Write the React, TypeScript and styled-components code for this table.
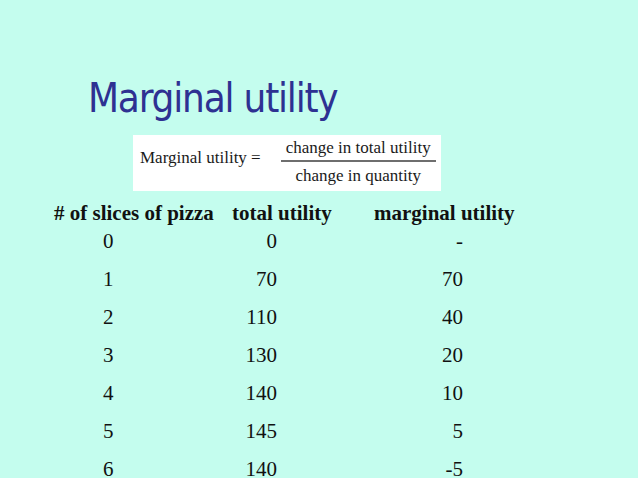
import React from "react";
import styled, { createGlobalStyle } from "styled-components";

const GlobalStyle = createGlobalStyle`
  html, body {
    margin: 0;
    padding: 0;
    background: #c4fdee;
  }
  body {
    width: 638px;
    height: 478px;
    overflow: hidden;
  }
`;

const Slide = styled.div`
  width: 638px;
  height: 478px;
  box-sizing: border-box;
  padding-top: 75px;
  background: #c4fdee;
  display: flex;
  flex-direction: column;
  overflow: hidden;

  & > * {
    flex-shrink: 0;
  }
`;

const Title = styled.h1`
  margin: 0 0 0 88px;
  font-family: "DejaVu Sans Condensed", "DejaVu Sans", sans-serif;
  font-weight: normal;
  font-size: 40px;
  line-height: 46px;
  letter-spacing: -1.2px;
  color: #2e3192;
`;

const FormulaBox = styled.div`
  margin: 14px 0 0 133px;
  width: 308px;
  height: 56px;
  box-sizing: border-box;
  padding: 3px 5px 0 7px;
  background: #ffffff;
  display: flex;
  align-items: flex-start;
  font-family: "Liberation Serif", "Times New Roman", serif;
  font-size: 17px;
  color: #1a1a1a;
`;

const FormulaLabel = styled.span`
  margin-top: 10px;
  line-height: 20px;
  white-space: nowrap;
`;

const Fraction = styled.div`
  margin-left: 20px;
  width: 155px;
  display: flex;
  flex-direction: column;
  align-items: center;
`;

const Numerator = styled.span`
  line-height: 20px;
  white-space: nowrap;
`;

const FractionRule = styled.div`
  align-self: stretch;
  height: 2px;
  margin-top: 2px;
  background: #6e6e6e;
`;

const Denominator = styled.span`
  margin-top: 4px;
  line-height: 20px;
  white-space: nowrap;
`;

const Table = styled.div`
  margin: 14px 0 0 54px;
  display: grid;
  grid-template-columns: 178px 142px 141px;
  font-family: "Liberation Serif", "Times New Roman", serif;
  font-size: 21px;
  color: #111111;
`;

const HeadCell = styled.div`
  font-weight: bold;
  line-height: 17px;
  white-space: nowrap;
`;

const Cell = styled.div<{ $align: "left" | "right"; $pad: number }>`
  line-height: 38px;
  text-align: ${(p) => p.$align};
  padding-left: ${(p) => (p.$align === "left" ? p.$pad : 0)}px;
  padding-right: ${(p) => (p.$align === "right" ? p.$pad : 0)}px;
  white-space: nowrap;
`;

const rows: [string, string, string][] = [
  ["0", "0", "-"],
  ["1", "70", "70"],
  ["2", "110", "40"],
  ["3", "130", "20"],
  ["4", "140", "10"],
  ["5", "145", "5"],
  ["6", "140", "-5"],
];

export default function App() {
  return (
    <>
      <GlobalStyle />
      <Slide>
        <Title>Marginal utility</Title>
        <FormulaBox>
          <FormulaLabel>Marginal utility =</FormulaLabel>
          <Fraction>
            <Numerator>change in total utility</Numerator>
            <FractionRule />
            <Denominator>change in quantity</Denominator>
          </Fraction>
        </FormulaBox>
        <Table>
          <HeadCell># of slices of pizza</HeadCell>
          <HeadCell>total utility</HeadCell>
          <HeadCell>marginal utility</HeadCell>
          {rows.map(([q, tu, mu]) => (
            <React.Fragment key={q}>
              <Cell $align="left" $pad={49}>{q}</Cell>
              <Cell $align="right" $pad={97}>{tu}</Cell>
              <Cell $align="right" $pad={52}>{mu}</Cell>
            </React.Fragment>
          ))}
        </Table>
      </Slide>
    </>
  );
}
